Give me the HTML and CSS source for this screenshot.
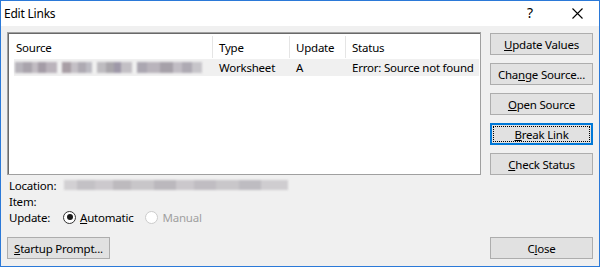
FILE: index.html
```html
<!DOCTYPE html>
<html>
<head>
<meta charset="utf-8">
<title>Edit Links</title>
<link rel="stylesheet" href="styles.css">
</head>
<body>
<div class="window">
  <div class="titlebar">
    <span class="title">Edit Links</span>
    <span class="help">?</span>
    <span class="close-x"><svg width="11" height="11" viewBox="0 0 11 11"><path d="M0.5 0.5 L10.5 10.5 M10.5 0.5 L0.5 10.5" stroke="#000" stroke-width="1.1" fill="none"/></svg></span>
  </div>
  <div class="content">
    <div class="main">
      <div class="listbox">
        <div class="hdr">
          <div class="hc c1">Source</div>
          <div class="hc c2">Type</div>
          <div class="hc c3">Update</div>
          <div class="hc c4">Status</div>
        </div>
        <div class="row">
          <div class="dc c1"><span class="blur b1"></span><span class="blur b2"></span><span class="blur b3"></span><span class="blur b4"></span></div>
          <div class="dc c2">Worksheet</div>
          <div class="dc c3">A</div>
          <div class="dc c4">Error: Source not found</div>
        </div>
      </div>
      <div class="btncol">
        <div class="btn"><u>U</u>pdate Values</div>
        <div class="btn">Cha<u>n</u>ge Source...</div>
        <div class="btn"><u>O</u>pen Source</div>
        <div class="btn focus"><u>B</u>reak Link</div>
        <div class="btn"><u>C</u>heck Status</div>
      </div>
    </div>
    <div class="info">
      <div class="line"><span class="lbl">Location:</span><span class="blur loc"></span></div>
      <div class="line"><span class="lbl">Item:</span></div>
      <div class="line"><span class="lbl">Update:</span>
        <span class="radio on"></span><span class="rtext"><u>A</u>utomatic</span>
        <span class="radio off"></span><span class="rtext dis">Manual</span>
      </div>
    </div>
    <div class="bottom">
      <div class="btn"><u>S</u>tartup Prompt...</div>
      <div class="btn">C<u>l</u>ose</div>
    </div>
  </div>
</div>
</body>
</html>
```

FILE: styles.css
```css
html, body { margin: 0; padding: 0; }
body {
  font-family: "Noto Sans", "Open Sans", sans-serif;
  font-size: 11.5px;
  letter-spacing: -0.22px;
  color: #000;
  background: #fff;
}
.window {
  width: 600px;
  height: 267px;
  box-sizing: border-box;
  border: 1px solid #2b79d8;
  display: flex;
  flex-direction: column;
  background: #f0f0f0;
}
.titlebar {
  height: 25px;
  flex: none;
  background: #fff;
  display: flex;
  align-items: center;
}
.title { padding-left: 3px; font-size: 12px; flex: 1; padding-bottom: 1px; }
.help { width: 6px; font-size: 14px; margin-right: 39px; padding-bottom: 2px; }
.close-x { width: 11px; height: 11px; margin-right: 16px; display: flex; margin-bottom: 1px; }
.content {
  flex: 1;
  display: flex;
  flex-direction: column;
  padding: 6px 6px 7px 6px;
}
.main { display: flex; gap: 9px; }
.listbox {
  flex: 1;
  height: 143px;
  box-sizing: border-box;
  background: #fff;
  border: 1px solid #a0a0a0;
  box-shadow: inset 1px 1px 0 #696969;
  padding: 2px 1px 1px 6px;
}
.hdr { display: flex; height: 24px; }
.hc {
  box-sizing: border-box;
  height: 22px;
  margin-top: 1px;
  display: flex;
  align-items: center;
  padding-left: 6px;
  padding-top: 1px;
  border-right: 1px solid #e5e5e5;
}
.c1 { width: 199px; padding-left: 2px; box-sizing: border-box; }
.c2 { width: 77px; box-sizing: border-box; }
.c3 { width: 56px; box-sizing: border-box; }
.c4 { flex: 1; border-right: none; }
.row { display: flex; height: 17px; background: #f0f0f0; }
.dc { display: flex; align-items: center; padding-left: 6px; }
.dc.c1 { padding-left: 1px; gap: 5px; }
.blur {
  display: inline-block;
  height: 11px;
  filter: blur(0.8px);
}
.b1 { width: 42px; background: linear-gradient(90deg, #b7b4bb 0 20%, #a9a4ac 20% 40%, #c1bcc2 40% 55%, #a49ca6 55% 75%, #bab3bb 75% 100%); }
.b2 { width: 30px; background: linear-gradient(90deg, #a89ea5 0 30%, #c4c0c6 30% 55%, #aeaab2 55% 80%, #bdbcc3 80% 100%); }
.b3 { width: 35px; background: linear-gradient(90deg, #bebcc0 0 25%, #a9a6ab 25% 50%, #9e98a8 50% 70%, #c3c0c5 70% 100%); }
.b4 { width: 65px; background: linear-gradient(90deg, #aba7b1 0 15%, #b9b4bc 15% 35%, #a6a1a9 35% 55%, #c1bdc4 55% 70%, #aeaab3 70% 85%, #c7c5ca 85% 100%); }
.btncol {
  width: 103px;
  display: flex;
  flex-direction: column;
  gap: 8px;
  margin-top: 1px;
}
.btn {
  box-sizing: border-box;
  height: 22px;
  width: 103px;
  background: #e1e1e1;
  border: 1px solid #adadad;
  display: flex;
  align-items: center;
  justify-content: center;
  position: relative;
  white-space: nowrap;
}
.btn.focus {
  border-color: #0078d7;
  box-shadow: inset 0 0 0 1px #0078d7;
}
.btn.focus::after {
  content: "";
  position: absolute;
  left: 2px; right: 2px; top: 2px; bottom: 2px;
  border: 1px dotted #000;
}
.info { display: flex; flex-direction: column; margin-top: 2px; }
.line { height: 16px; display: flex; align-items: center; padding-left: 2px; }
.lbl { width: 54px; flex: none; }
.loc {
  width: 224px;
  height: 10px;
  margin-left: 1px;
  background: linear-gradient(90deg, #d2d0d3 0 6%, #c3c1c5 6% 14%, #ccc9cd 14% 22%, #bdbabe 22% 30%, #c8c6c9 30% 40%, #bbb8bd 40% 50%, #cbc8cc 50% 58%, #c0bdc2 58% 68%, #c9c7ca 68% 78%, #bebcc1 78% 88%, #cfcdd0 88% 100%);
}
.radio {
  box-sizing: border-box;
  width: 13px;
  height: 13px;
  border-radius: 50%;
  background: #fff;
  flex: none;
  position: relative;
}
.radio.on { border: 1px solid #333; }
.radio.on::after {
  content: "";
  position: absolute;
  left: 2.5px; top: 2.5px;
  width: 6px; height: 6px;
  border-radius: 50%;
  background: #1a1a1a;
}
.radio.off { border: 1px solid #cccccc; margin-left: 12px; }
.rtext { margin-left: 4px; }
.rtext.dis { color: #a0a0a0; margin-left: 4px; }
.bottom {
  margin-top: auto;
  display: flex;
  justify-content: space-between;
}
```
